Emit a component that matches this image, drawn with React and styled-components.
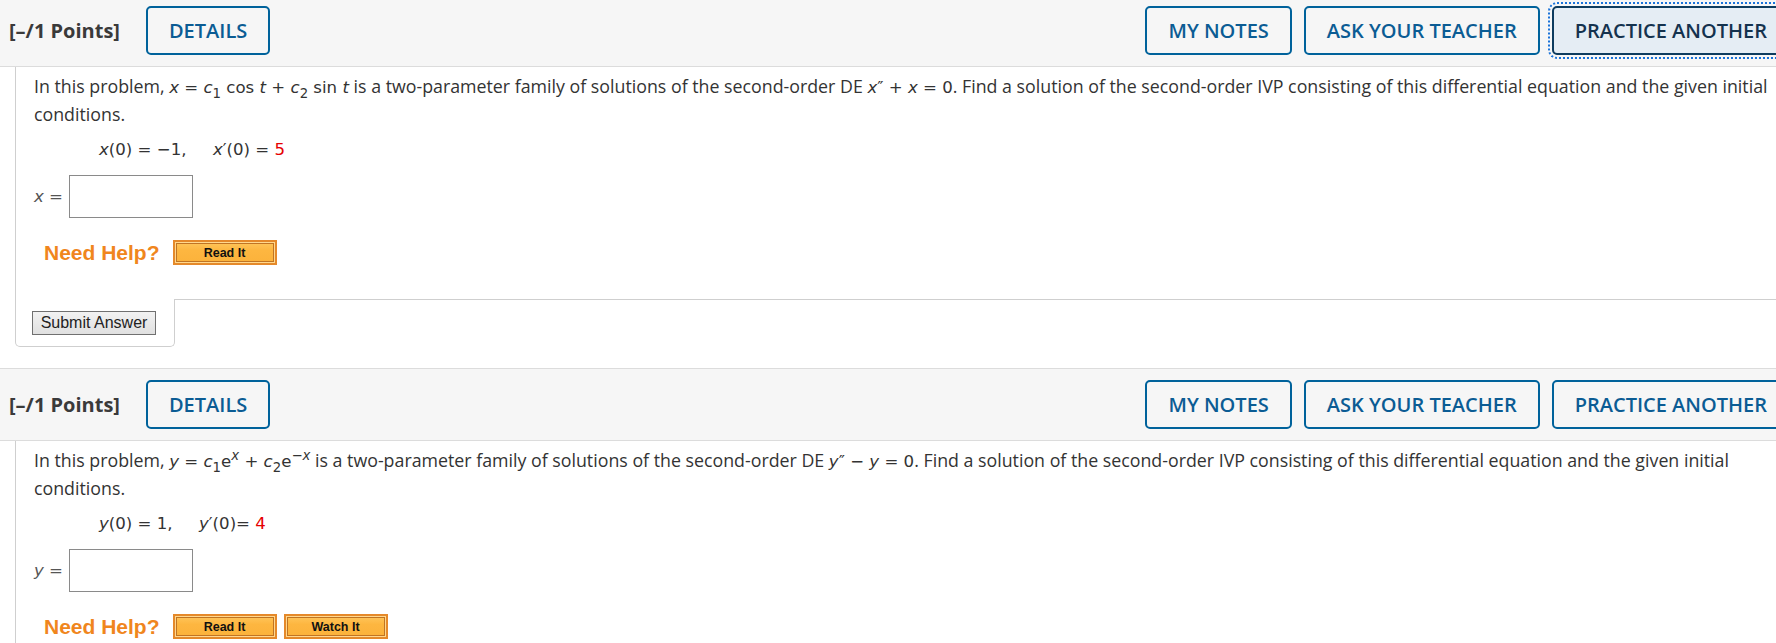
import React from "react";
import styled, { createGlobalStyle } from "styled-components";

const Global = createGlobalStyle`
  html, body { margin: 0; padding: 0; background: #fff; overflow: hidden; }
  body { font-family: "Open Sans", "Liberation Sans", sans-serif; color: #333; }
  * { box-sizing: border-box; }
`;

const Page = styled.div`
  width: 1800px;
  margin-top: -6px;
`;

const Header = styled.div`
  display: flex;
  align-items: center;
  justify-content: space-between;
  background: #f6f6f6;
  border-top: 1px solid #dcdcdc;
  border-bottom: 1px solid #dcdcdc;
  padding: 11px 10px 11px 9px;
`;

const Group = styled.div`
  display: flex;
  align-items: center;
  gap: ${(p) => p.$gap}px;
`;

const Points = styled.span`
  font: 700 20px "Open Sans", sans-serif;
  color: #3a3a3a;
`;

const HeaderButton = styled.button`
  height: 49px;
  padding: 0 21px;
  border: 2px solid ${(p) => (p.$focused ? "#0d3b5e" : "#00629b")};
  border-radius: 5px;
  background: ${(p) => (p.$focused ? "#e5edf4" : "transparent")};
  color: ${(p) => (p.$focused ? "#14324e" : "#0b5c94")};
  font: 600 20px "Open Sans", sans-serif;
  white-space: nowrap;
  outline: ${(p) => (p.$focused ? "2px dotted #1a73d9" : "none")};
  outline-offset: 2px;
  cursor: pointer;
`;

const Question = styled.div`
  margin: 0 0 21px 15px;
`;

const Body = styled.div`
  border-left: 1px solid #cfcfcf;
  padding: 6px 0 34px 18px;
`;

const Text = styled.p`
  margin: 0;
  max-width: 1755px;
  font-size: 17.8px;
  line-height: 27px;
  color: #333;
`;

const M = styled.span`
  font-family: "DejaVu Sans", Verdana, sans-serif;
  font-size: 16.6px;
  color: #333;
  white-space: nowrap;
`;

const V = styled.i`
  font-style: italic;
`;

const Sub = styled.sub`
  font-size: 0.8em;
  line-height: 0;
  vertical-align: -0.4em;
`;

const Sup = styled.sup`
  font-size: 0.8em;
  line-height: 0;
  vertical-align: 0.5em;
`;

const Red = styled.span`
  color: #e60000;
`;

const Equation = styled.div`
  margin: 8px 0 0 65px;
  line-height: 26px;
`;

const AnswerRow = styled.div`
  display: flex;
  align-items: center;
  gap: 6px;
  margin-top: 12px;
`;

const AnswerLabel = styled(M)`
  color: #555;
`;

const AnswerBox = styled.input`
  width: 124px;
  height: 43px;
  border: 1px solid #8a8a8a;
  background: #fff;
  padding: 0 4px;
  font: 15px "DejaVu Sans", sans-serif;
`;

const HelpRow = styled.div`
  display: flex;
  align-items: center;
  gap: 7px;
  margin: 22px 0 0 10px;
`;

const NeedHelp = styled.span`
  font: 700 21px "Liberation Sans", Arial, sans-serif;
  color: #f0861d;
  margin-right: 6px;
`;

const HelpButton = styled.button`
  width: 104px;
  height: 25px;
  padding: 0;
  border: 2px solid #e5892a;
  background: linear-gradient(#ffc65c, #fdb640 40%, #fbb23b);
  box-shadow: inset 0 0 0 1px #ffd88e, inset 0 0 0 2px #c07424;
  font: 700 12.5px "Liberation Sans", Arial, sans-serif;
  color: #111;
  cursor: pointer;
`;

const Footer = styled.div`
  display: flex;
  align-items: flex-start;
`;

const SubmitTab = styled.div`
  width: 160px;
  padding: 12px 17px 11px 16px;
  border: 1px solid #cfcfcf;
  border-top: none;
  border-radius: 0 0 5px 5px;
`;

const SubmitButton = styled.button`
  width: 124px;
  height: 24px;
  padding: 0;
  border: 1px solid #707070;
  background: linear-gradient(#f2f2f2, #e0e0e0);
  font: 16px "Liberation Sans", Arial, sans-serif;
  color: #222;
  cursor: pointer;
`;

const Filler = styled.div`
  flex: 1;
  border-top: 1px solid #cfcfcf;
`;

function QuestionHeader({ focused }) {
  return (
    <Header>
      <Group $gap={26}>
        <Points>[–/1 Points]</Points>
        <HeaderButton>DETAILS</HeaderButton>
      </Group>
      <Group $gap={12}>
        <HeaderButton>MY NOTES</HeaderButton>
        <HeaderButton>ASK YOUR TEACHER</HeaderButton>
        <HeaderButton $focused={focused}>PRACTICE ANOTHER</HeaderButton>
      </Group>
    </Header>
  );
}

export default function App() {
  return (
    <>
      <Global />
      <Page>
        <QuestionHeader focused />
        <Question>
          <Body>
            <Text>
              In this problem,{" "}
              <M>
                <V>x</V> = <V>c</V>
                <Sub>1</Sub> cos <V>t</V> + <V>c</V>
                <Sub>2</Sub> sin <V>t</V>
              </M>{" "}
              is a two-parameter family of solutions of the second-order DE{" "}
              <M>
                <V>x</V>″ + <V>x</V> = 0
              </M>
              . Find a solution of the second-order IVP consisting of this differential equation and the given
              initial conditions.
            </Text>
            <Equation>
              <M>
                <V>x</V>(0) = −1,&nbsp;&nbsp;&nbsp;&nbsp; <V>x</V>′(0) = <Red>5</Red>
              </M>
            </Equation>
            <AnswerRow>
              <AnswerLabel>
                <V>x</V> =
              </AnswerLabel>
              <AnswerBox type="text" />
            </AnswerRow>
            <HelpRow>
              <NeedHelp>Need Help?</NeedHelp>
              <HelpButton>Read It</HelpButton>
            </HelpRow>
          </Body>
          <Footer>
            <SubmitTab>
              <SubmitButton>Submit Answer</SubmitButton>
            </SubmitTab>
            <Filler />
          </Footer>
        </Question>

        <QuestionHeader />
        <Question>
          <Body>
            <Text>
              In this problem,{" "}
              <M>
                <V>y</V> = <V>c</V>
                <Sub>1</Sub>e<Sup><V>x</V></Sup> + <V>c</V>
                <Sub>2</Sub>e<Sup>−<V>x</V></Sup>
              </M>{" "}
              is a two-parameter family of solutions of the second-order DE{" "}
              <M>
                <V>y</V>″ − <V>y</V> = 0
              </M>
              . Find a solution of the second-order IVP consisting of this differential equation and the given
              initial conditions.
            </Text>
            <Equation>
              <M>
                <V>y</V>(0) = 1,&nbsp;&nbsp;&nbsp;&nbsp; <V>y</V>′(0)= <Red>4</Red>
              </M>
            </Equation>
            <AnswerRow>
              <AnswerLabel>
                <V>y</V> =
              </AnswerLabel>
              <AnswerBox type="text" />
            </AnswerRow>
            <HelpRow>
              <NeedHelp>Need Help?</NeedHelp>
              <HelpButton>Read It</HelpButton>
              <HelpButton>Watch It</HelpButton>
            </HelpRow>
          </Body>
          <Footer>
            <SubmitTab>
              <SubmitButton>Submit Answer</SubmitButton>
            </SubmitTab>
            <Filler />
          </Footer>
        </Question>
      </Page>
    </>
  );
}
